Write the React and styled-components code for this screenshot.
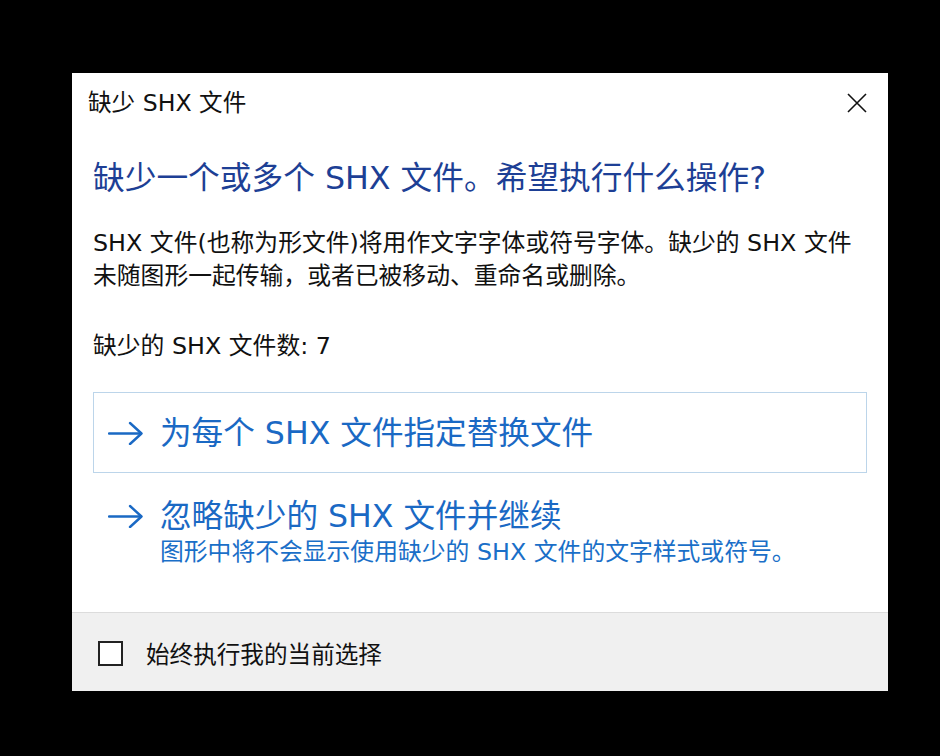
import React from "react";
import styled, { createGlobalStyle } from "styled-components";

const Global = createGlobalStyle`
  html, body { margin: 0; padding: 0; background: #000; }
  body { font-family: "DejaVu Sans", "Noto Sans CJK SC", sans-serif; }
`;

const Page = styled.div`
  width: 940px;
  height: 756px;
  background: #000;
  padding: 73px 0 0 72px;
  box-sizing: border-box;
`;

const Dialog = styled.div`
  width: 816px;
  height: 618px;
  background: #fff;
  display: flex;
  flex-direction: column;
  font-family: "DejaVu Sans", "Noto Sans CJK SC", sans-serif;
`;

const TitleBar = styled.div`
  height: 60px;
  display: flex;
  align-items: center;
  justify-content: space-between;
  padding: 0 21px 0 16px;
`;

const TitleText = styled.div`
  font-size: 23.6px;
  color: #111;
  line-height: 30px;
`;

const CloseButton = styled.div`
  width: 20px;
  height: 20px;
  display: flex;
  align-items: center;
  justify-content: center;
`;

const Content = styled.div`
  padding: 25px 21px 0 21px;
  display: flex;
  flex-direction: column;
`;

const Heading = styled.div`
  font-size: 31.7px;
  line-height: 40px;
  color: #1d3f95;
  white-space: nowrap;
`;

const Body = styled.div`
  margin-top: ${(p) => p.$gap}px;
  font-size: 23.8px;
  line-height: 33px;
  color: #111;
  white-space: nowrap;
`;

const Option = styled.div`
  margin-top: ${(p) => p.$gap}px;
  border: 1px solid ${(p) => (p.$active ? "#bcd5ea" : "transparent")};
  padding: 20px 14px 19px 14px;
  display: flex;
  align-items: flex-start;
  gap: 16px;
`;

const ArrowBox = styled.div`
  width: 36px;
  height: 40px;
  display: flex;
  align-items: center;
  flex-shrink: 0;
`;

const OptionText = styled.div`
  display: flex;
  flex-direction: column;
`;

const OptionTitle = styled.div`
  font-size: 31.6px;
  line-height: 40px;
  color: #1a69c4;
  white-space: nowrap;
`;

const OptionSub = styled.div`
  margin-top: 1px;
  font-size: 23.8px;
  line-height: 30px;
  color: #1a6fc8;
  white-space: nowrap;
`;

const Footer = styled.div`
  margin-top: auto;
  height: 79px;
  box-sizing: border-box;
  background: #f0f0f0;
  border-top: 1px solid #dcdcdc;
  display: flex;
  align-items: center;
  padding: 2px 0 0 26px;
  gap: 23px;
`;

const Checkbox = styled.div`
  width: 25px;
  height: 25px;
  box-sizing: border-box;
  border: 2px solid #222;
  background: #fff;
`;

const CheckLabel = styled.div`
  font-size: 23.6px;
  line-height: 30px;
  color: #111;
  padding-top: 4px;
`;

const Arrow = () => (
  <svg width="36" height="24" viewBox="0 0 36 24" fill="none">
    <path d="M1 12.5 H33" stroke="#1a69c4" strokeWidth="2.4" strokeLinecap="round" />
    <path d="M22 2 L33.5 12.5 L22 23" stroke="#1a69c4" strokeWidth="2.4" strokeLinecap="round" strokeLinejoin="round" />
  </svg>
);

export default function App() {
  return (
    <>
      <Global />
      <Page>
        <Dialog>
          <TitleBar>
            <TitleText>缺少 SHX 文件</TitleText>
            <CloseButton>
              <svg width="20" height="20" viewBox="0 0 20 20">
                <path d="M1 1 L19 19 M19 1 L1 19" stroke="#111" strokeWidth="1.6" />
              </svg>
            </CloseButton>
          </TitleBar>
          <Content>
            <Heading>缺少一个或多个 SHX 文件。希望执行什么操作?</Heading>
            <Body $gap={29}>
              SHX 文件(也称为形文件)将用作文字字体或符号字体。缺少的 SHX 文件
              <br />
              未随图形一起传输，或者已被移动、重命名或删除。
            </Body>
            <Body $gap={37}>缺少的 SHX 文件数: 7</Body>
            <Option $gap={29} $active>
              <ArrowBox>
                <Arrow />
              </ArrowBox>
              <OptionText>
                <OptionTitle>为每个 SHX 文件指定替换文件</OptionTitle>
              </OptionText>
            </Option>
            <Option $gap={2}>
              <ArrowBox>
                <Arrow />
              </ArrowBox>
              <OptionText>
                <OptionTitle>忽略缺少的 SHX 文件并继续</OptionTitle>
                <OptionSub>图形中将不会显示使用缺少的 SHX 文件的文字样式或符号。</OptionSub>
              </OptionText>
            </Option>
          </Content>
          <Footer>
            <Checkbox />
            <CheckLabel>始终执行我的当前选择</CheckLabel>
          </Footer>
        </Dialog>
      </Page>
    </>
  );
}
